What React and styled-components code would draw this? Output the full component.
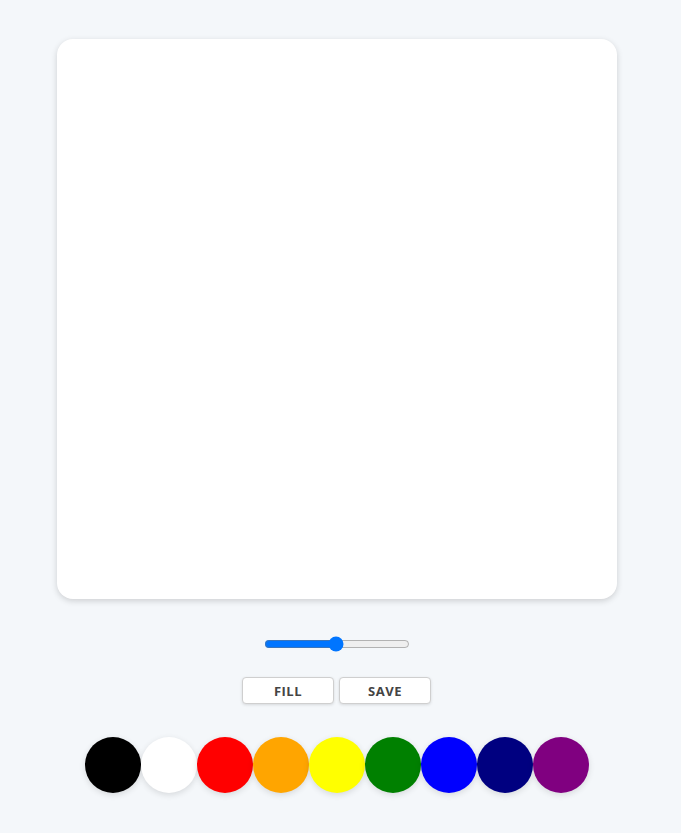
import React, { useState } from 'react';
import styled, { createGlobalStyle } from 'styled-components';

const colors = [
  '#000000',
  '#ffffff',
  '#ff0000',
  '#ffa500',
  '#ffff00',
  '#008000',
  '#0000ff',
  '#000080',
  '#800080',
];

const GlobalStyle = createGlobalStyle`
  html, body {
    margin: 0;
    background: #f4f7fa;
    font-family: 'Open Sans', 'Liberation Sans', sans-serif;
  }
`;

const App = () => {
  const [size, setSize] = useState(50);
  const [color, setColor] = useState('#000000');

  return (
    <Page>
      <GlobalStyle />
      <Board />
      <SizeSlider
        type="range"
        min="1"
        max="100"
        value={size}
        onChange={e => setSize(e.target.value)}
      />
      <Buttons>
        <ToolButton>Fill</ToolButton>
        <ToolButton>Save</ToolButton>
      </Buttons>
      <Palette>
        {colors.map(c => (
          <Swatch
            key={c}
            $color={c}
            $active={c === color}
            onClick={() => setColor(c)}
          />
        ))}
      </Palette>
    </Page>
  );
};

export default App;

const Page = styled.div`
  width: 674px;
  display: flex;
  flex-direction: column;
  align-items: center;
  padding-top: 39px;
  padding-bottom: 40px;
`;

const Board = styled.div`
  width: 560px;
  height: 560px;
  background: #fff;
  border-radius: 16px;
  box-shadow: 0 2px 6px rgba(0, 0, 0, 0.16);
`;

const SizeSlider = styled.input`
  width: 146px;
  margin: 37px 0 0;
  accent-color: #0075ff;
  cursor: pointer;
`;

const Buttons = styled.div`
  display: flex;
  gap: 5px;
  margin: 25px 0 0 -1px;
`;

const ToolButton = styled.button`
  width: 92px;
  height: 27px;
  background: #fff;
  border: 1px solid #cfcfcf;
  border-radius: 4px;
  box-shadow: 0 1px 3px rgba(0, 0, 0, 0.12);
  font-family: 'Open Sans', 'Liberation Sans', sans-serif;
  font-size: 13px;
  font-weight: 700;
  letter-spacing: 0.5px;
  text-transform: uppercase;
  color: #444;
  cursor: pointer;
`;

const Palette = styled.div`
  display: flex;
  margin-top: 33px;
`;

const Swatch = styled.div`
  width: 56px;
  height: 56px;
  border-radius: 50%;
  background: ${props => props.$color};
  box-shadow: 0 2px 6px rgba(0, 0, 0, 0.12);
  cursor: pointer;
`;
